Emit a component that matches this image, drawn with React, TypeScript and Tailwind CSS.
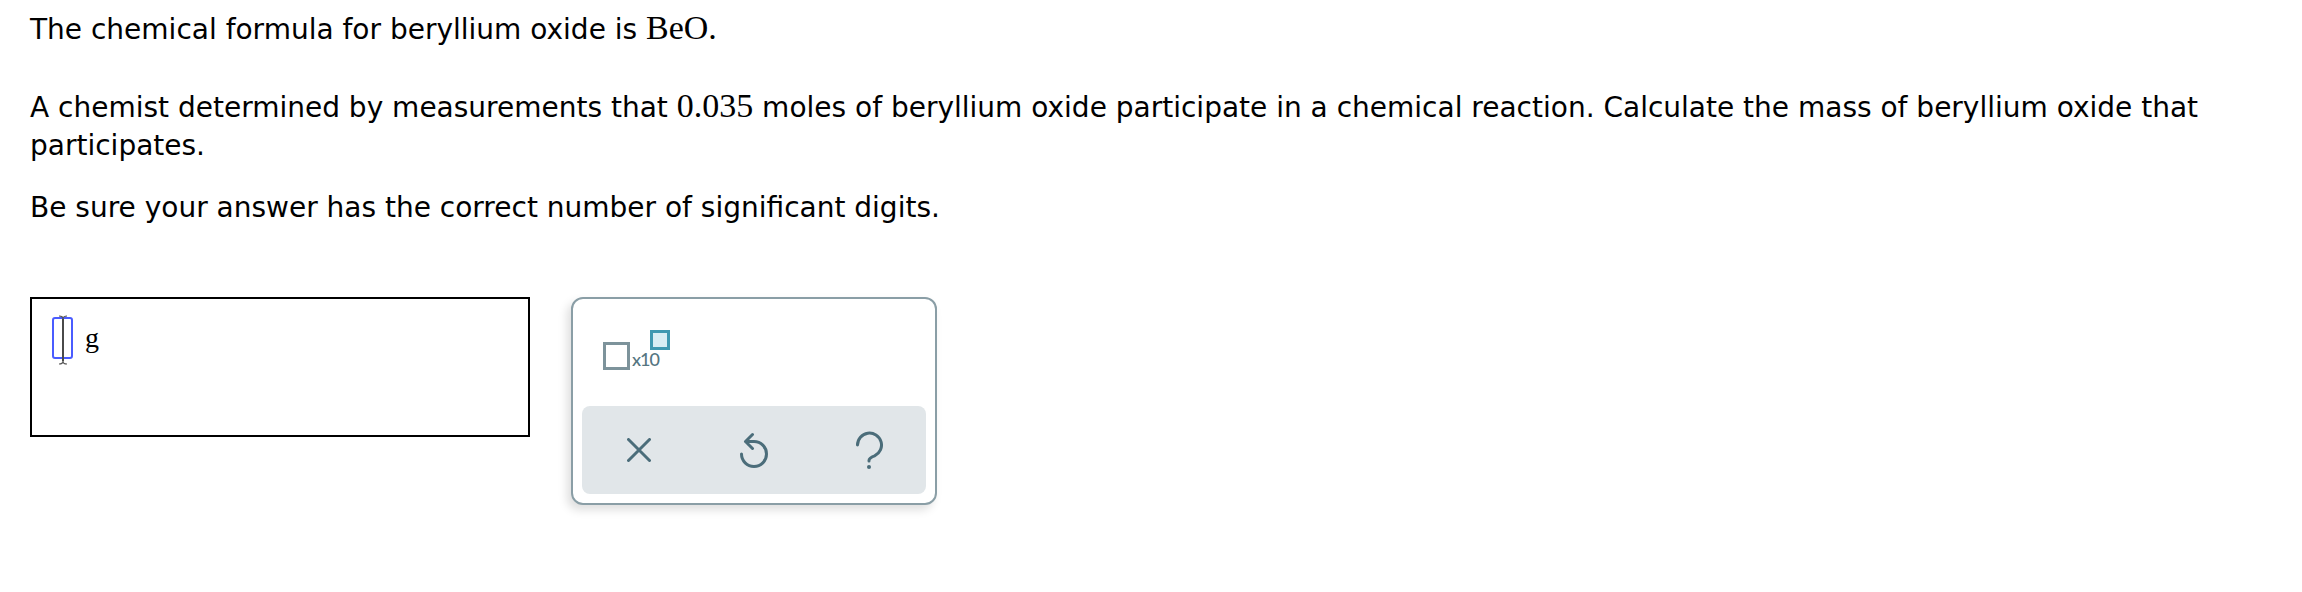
import React from 'react';

const Math = ({ children }: { children: React.ReactNode }) => (
  <span className="font-['Liberation_Serif','Times_New_Roman',serif] text-[34px] leading-none">{children}</span>
);

export default function App() {
  return (
    <div className="min-h-screen bg-white px-[30px] pt-[11px] font-['DejaVu_Sans',Verdana,sans-serif] text-[28px] leading-[38px] text-black">
      <p>
        The chemical formula for beryllium oxide is <Math>BeO.</Math>
      </p>
      <p className="mt-[40px]">
        A chemist determined by measurements that <Math>0.035</Math> moles of beryllium oxide participate in a chemical
        reaction. Calculate the mass of beryllium oxide that participates.
      </p>
      <p className="mt-[24px]">Be sure your answer has the correct number of significant digits.</p>

      <div className="mt-[70px] flex items-start gap-[41px]">
        {/* Answer box */}
        <div className="flex h-[140px] w-[500px] items-start border-2 border-black pl-[20px] pt-[18px]">
          <div className="relative h-[42px] w-[21px] rounded-[3px] border-2 border-[#4a5cff]">
            <svg className="absolute left-[3px] top-[-4px]" width="12" height="50" viewBox="0 0 12 50" fill="none">
              <path d="M6 3.5V46.5" stroke="#4a4a4a" strokeWidth="2" />
              <path d="M2 1c2 0 4 1 4 2.5C6 2 8 1 10 1M2 49c2 0 4-1 4-2.5C6 48 8 49 10 49" stroke="#555" strokeWidth="1.2" />
            </svg>
          </div>
          <span className="ml-[12px] mt-[7px] font-['Liberation_Serif','Times_New_Roman',serif] text-[28px] leading-none">g</span>
        </div>

        {/* Tool panel */}
        <div className="flex h-[208px] w-[366px] flex-col rounded-[12px] border-2 border-[#8a9ea6] bg-white shadow-[-4px_5px_10px_rgba(0,0,0,0.13)]">
          <div className="h-[107px] pl-[30px] pt-[31px]">
            <div className="relative flex items-start">
              <div className="mt-[12px] h-[28px] w-[27px] border-[3px] border-[#7d939b] bg-white" />
              <span className="ml-[2px] mt-[20px] font-['Lato',sans-serif] text-[18px] font-medium leading-none tracking-[-1px] text-[#557581]">
                x10
              </span>
              <div className="absolute left-[47px] top-0 h-[20px] w-[20px] border-[3px] border-[#3c98b0] bg-[#d5edf3]" />
            </div>
          </div>
          <div className="mx-[9px] mb-[9px] grid h-[88px] grid-cols-3 items-center justify-items-center rounded-[8px] bg-[#e1e6e9] text-[#4b6d7a]">
            <svg width="24" height="24" viewBox="0 0 24 24" fill="none">
              <path d="M1.5 1.5L22.5 22.5M22.5 1.5L1.5 22.5" stroke="currentColor" strokeWidth="3" strokeLinecap="round" />
            </svg>
            <svg width="28" height="36" viewBox="0 0 28 36" fill="none">
              <path
                d="M5.5 9.5H14A12.5 12.5 0 1 1 1.5 22M12.5 2.5L5.5 9.5L12.5 16.5"
                stroke="currentColor"
                strokeWidth="3"
                strokeLinecap="round"
                strokeLinejoin="round"
              />
            </svg>
            <svg width="28" height="40" viewBox="0 0 28 40" fill="none">
              <path
                d="M2.5 15A12 12 0 1 1 19.6 25.9Q14 28 14 30.5V31"
                stroke="currentColor"
                strokeWidth="3"
                strokeLinecap="round"
              />
              <circle cx="14" cy="37" r="2" fill="currentColor" />
            </svg>
          </div>
        </div>
      </div>
    </div>
  );
}
